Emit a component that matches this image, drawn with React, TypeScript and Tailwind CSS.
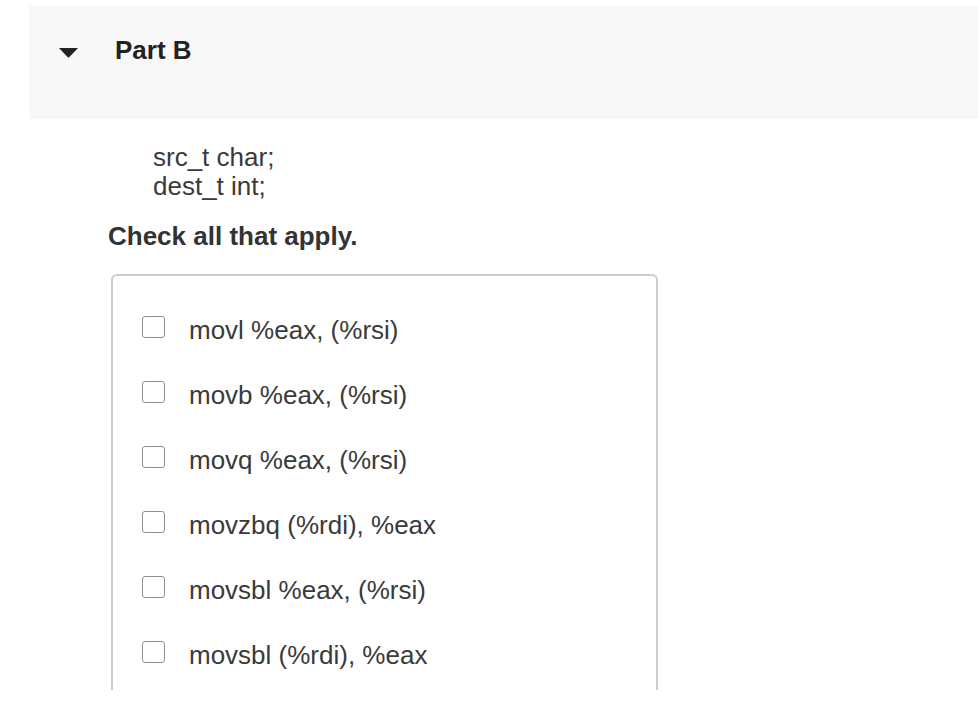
import { useState } from "react";

const options = [
  "movl %eax, (%rsi)",
  "movb %eax, (%rsi)",
  "movq %eax, (%rsi)",
  "movzbq (%rdi), %eax",
  "movsbl %eax, (%rsi)",
  "movsbl (%rdi), %eax",
];

export default function App() {
  const [checked, setChecked] = useState<boolean[]>(options.map(() => false));

  const toggle = (i: number) =>
    setChecked((prev) => prev.map((v, j) => (j === i ? !v : v)));

  return (
    <div className="h-[716px] w-[978px] bg-white font-['Liberation_Sans',Helvetica,Arial,sans-serif]">
      <div className="h-[690px] overflow-hidden pt-[6px]">
        {/* section header */}
        <div className="ml-[29px] flex h-[113px] items-start bg-[#f8f8f8] pt-[30px]">
          <svg
            width="21"
            height="11"
            viewBox="0 0 21 11"
            className="ml-[29px] mt-[11px]"
          >
            <path d="M1 1 H20 L11.2 10.2 Q10.5 10.9 9.8 10.2 Z" fill="#222" />
          </svg>
          <h2 className="ml-[36px] text-[26px] font-bold leading-[29px] text-[#222]">
            Part B
          </h2>
        </div>

        {/* question */}
        <div className="pl-[153px] pt-[24px] text-[26px] leading-[29px] text-[#3a3a3a]">
          <div>src_t char;</div>
          <div>dest_t int;</div>
        </div>

        <p className="ml-[108px] mt-[21px] text-[26px] font-bold leading-[29px] text-[#333]">
          Check all that apply.
        </p>

        <div className="ml-[111px] mt-[23px] w-[547px] rounded-[6px] border-2 border-[#cccccc] pb-10 pl-[29px] pt-10">
          <ul className="flex flex-col gap-[36px]">
            {options.map((opt, i) => (
              <li key={opt}>
                <label className="flex cursor-pointer items-start gap-[24px] text-[26px] leading-[29px] text-[#3a3a3a]">
                  <input
                    type="checkbox"
                    checked={checked[i]}
                    onChange={() => toggle(i)}
                    className="mt-0 h-[22px] w-[23px] appearance-none rounded-[3px] border-[1.5px] border-[#8f8f8f] bg-white checked:bg-[#1a73e8]"
                  />
                  <span>{opt}</span>
                </label>
              </li>
            ))}
          </ul>
        </div>
      </div>
    </div>
  );
}
